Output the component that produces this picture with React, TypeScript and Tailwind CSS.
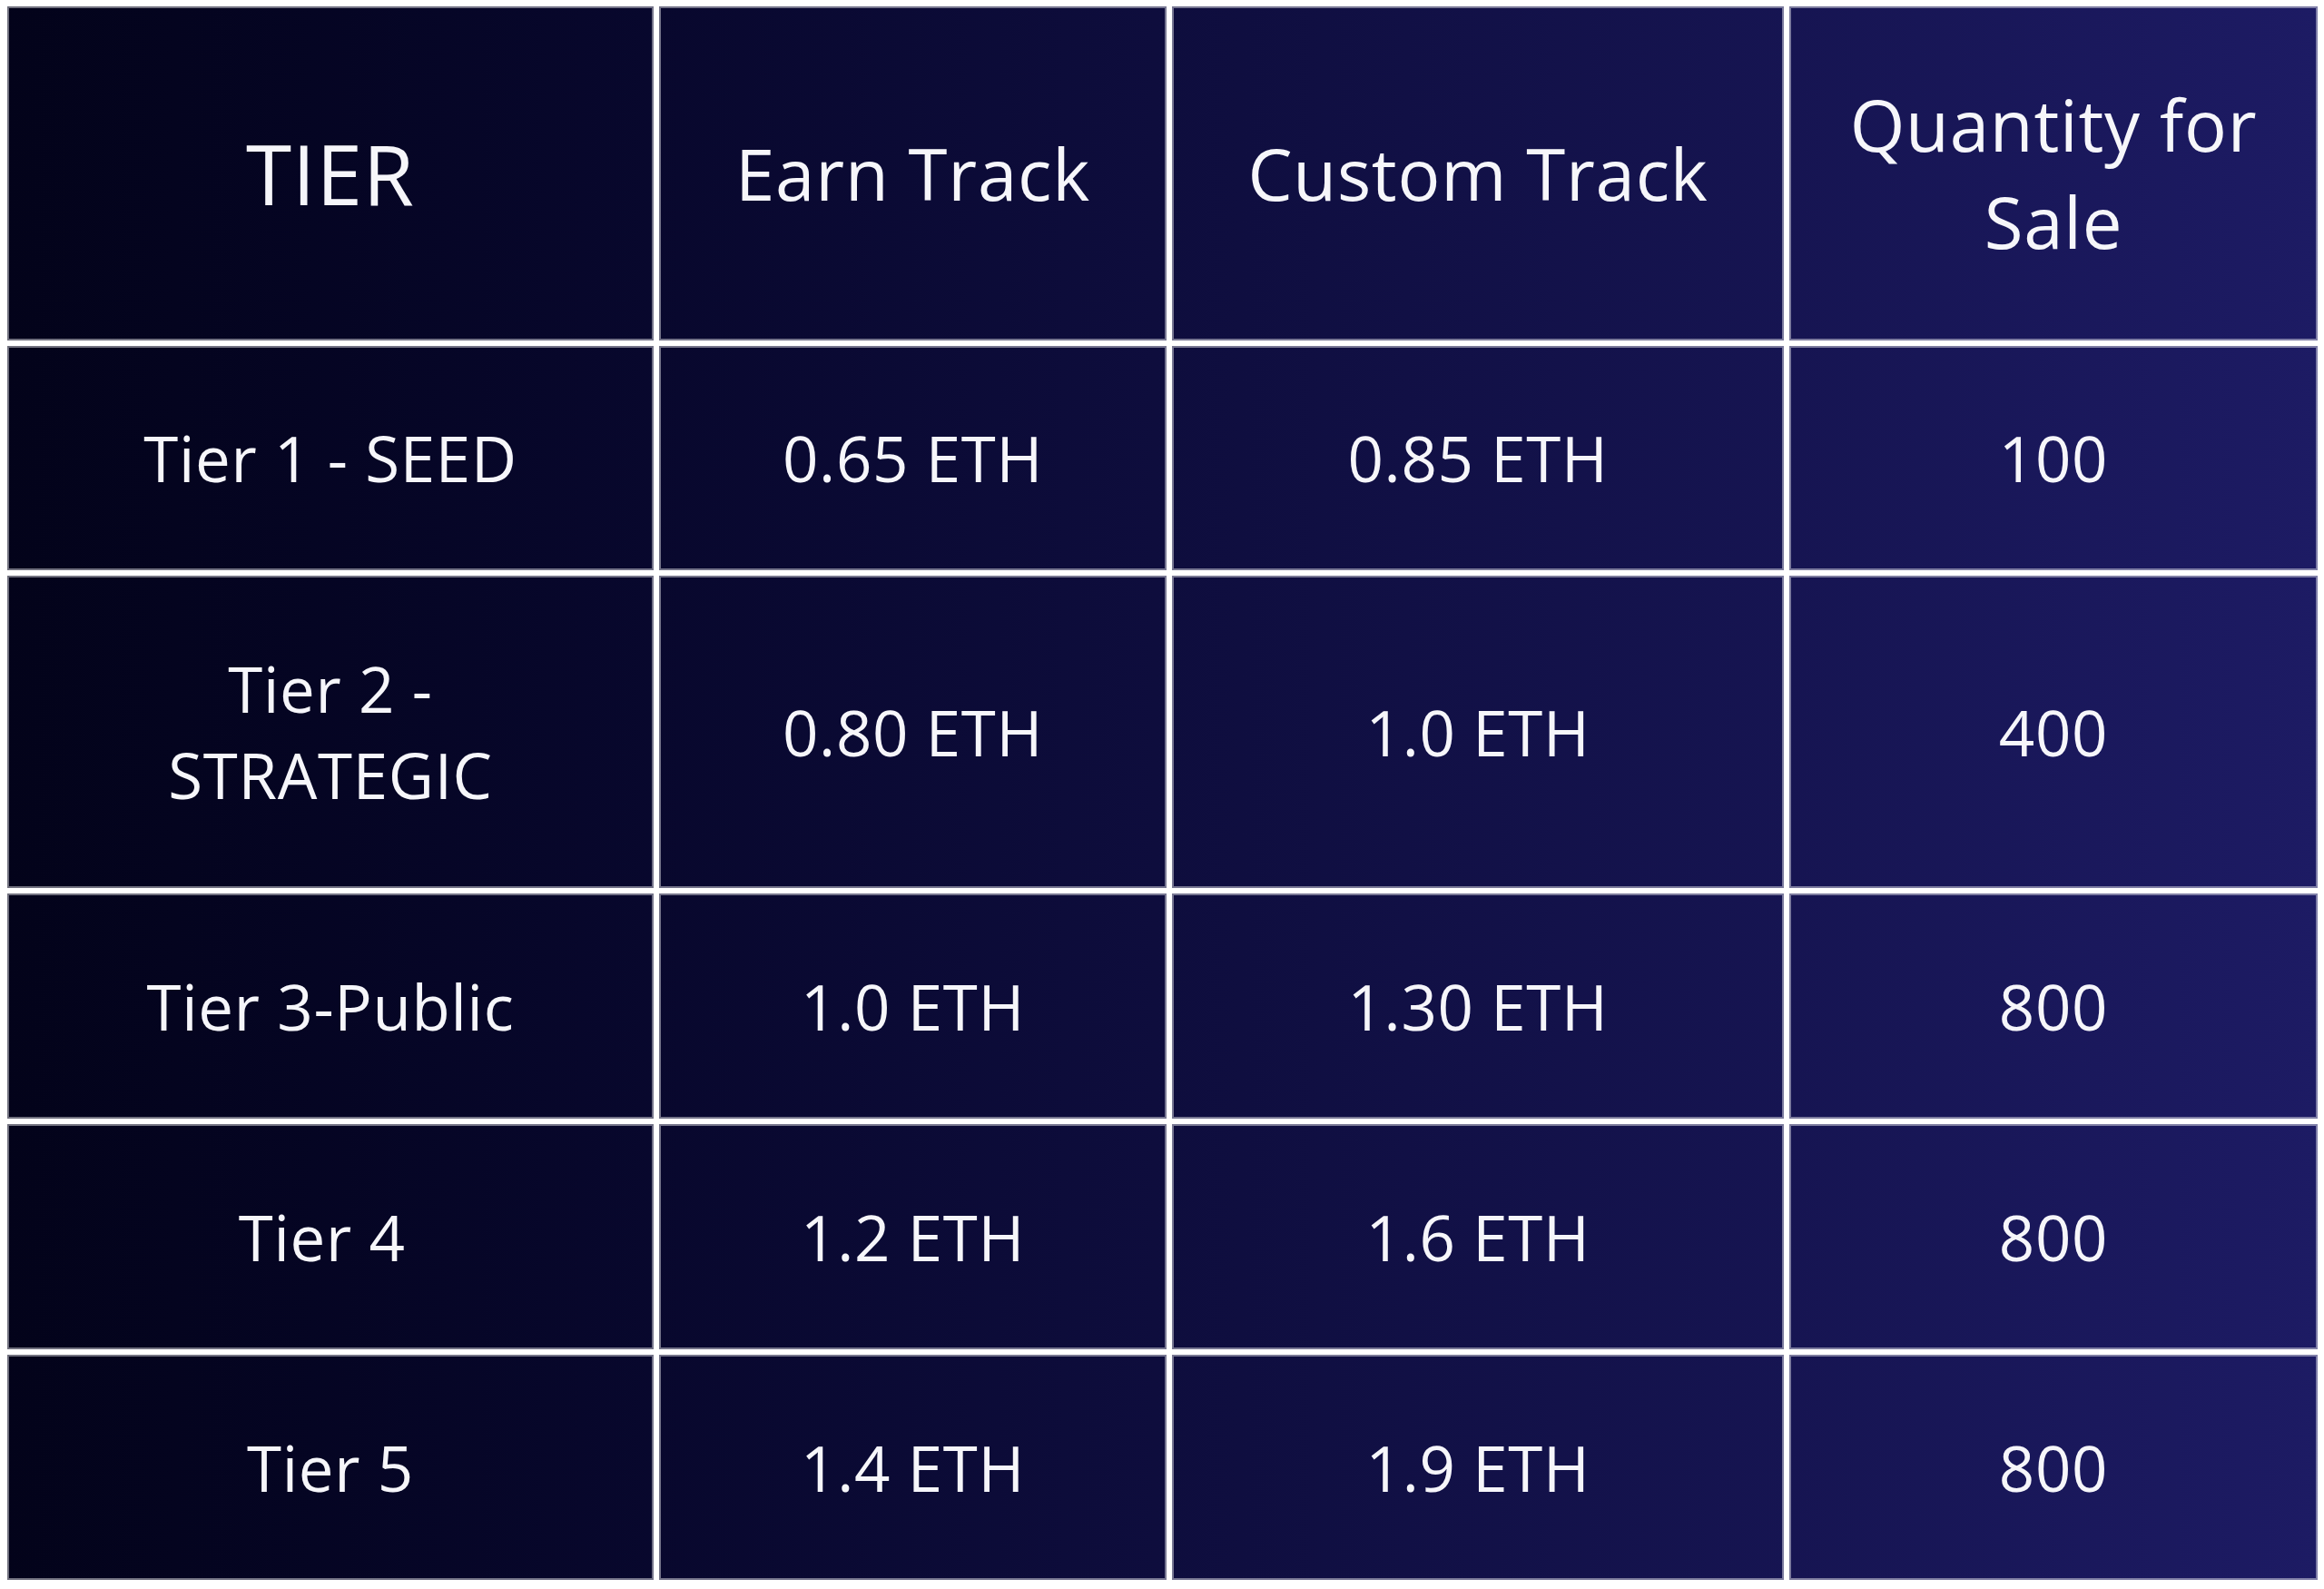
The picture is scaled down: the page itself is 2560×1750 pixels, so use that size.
import React from "react";

const header = ["TIER", "Earn Track", "Custom Track", "Quantity for Sale"];

const rows: React.ReactNode[][] = [
  ["Tier 1 - SEED", "0.65 ETH", "0.85 ETH", "100"],
  [
    <>
      Tier 2 -<br />
      STRATEGIC
    </>,
    "0.80 ETH",
    "1.0 ETH",
    "400",
  ],
  ["Tier 3-Public", "1.0 ETH", "1.30 ETH", "800"],
  ["Tier 4\u00a0", "1.2 ETH", "1.6 ETH", "800"],
  ["Tier 5", "1.4 ETH", "1.9 ETH", "800"],
];

function Cell({ children, className }: { children: React.ReactNode; className?: string }) {
  return (
    <div
      className={
        "flex items-center justify-center text-center border-2 border-[#ffffff70] bg-fixed bg-linear-to-r from-[#03031a] to-[#1d1b64] text-[#f6f6fa] leading-[1.37] tracking-[0.01em] " +
        (className ?? "")
      }
    >
      <span>{children}</span>
    </div>
  );
}

export default function App() {
  return (
    <div
      className="w-[2560px] h-[1750px] bg-white pl-[8px] pt-[7px] overflow-hidden"
      style={{ fontFamily: '"Open Sans", "Noto Sans", sans-serif' }}
    >
      <div className="grid grid-cols-[712px_559px_674px_582px] grid-rows-[368px_247px_344px_248px_248px_248px] gap-[6px] w-[2545px]">
        <Cell className="text-[91px]">{header[0]}</Cell>
        <Cell className="text-[78px]">{header[1]}</Cell>
        <Cell className="text-[78px]">{header[2]}</Cell>
        <Cell className="text-[78px]">
          Quantity for
          <br />
          Sale
        </Cell>
        {rows.map((r, i) =>
          r.map((c, j) => (
            <Cell key={`${i}-${j}`} className="text-[69px]">
              {c}
            </Cell>
          ))
        )}
      </div>
    </div>
  );
}
